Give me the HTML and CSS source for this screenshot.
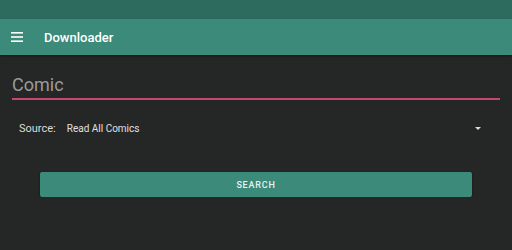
FILE: index.html
```html
<!DOCTYPE html>
<html>
<head>
    <title>Downloader</title>
    <link rel="stylesheet" href="styles.css">
</head>
<body>
    <div class="status-bar"></div>
    <div class="app-bar">
        <svg class="menu-icon" width="12" height="10" viewBox="0 0 12 10">
            <rect x="0" y="0" width="12" height="1.6" fill="#fff"/>
            <rect x="0" y="4.2" width="12" height="1.6" fill="#fff"/>
            <rect x="0" y="8.4" width="12" height="1.6" fill="#fff"/>
        </svg>
        <h1>Downloader</h1>
    </div>
    <div class="content">
        <div class="text-field">
            <span class="hint">Comic</span>
        </div>
        <div class="source-row">
            <span class="source-label">Source:</span>
            <span class="source-value">Read All Comics</span>
            <span class="arrow"></span>
        </div>
        <div class="button-row">
            <button class="search-button">SEARCH</button>
        </div>
    </div>
</body>
</html>
```

FILE: styles.css
```css
html, body {
    margin: 0;
    padding: 0;
    background: #252626;
    font-family: Roboto, "Liberation Sans", sans-serif;
}

.status-bar {
    height: 19px;
    background: #2d6b5f;
}

.app-bar {
    height: 36px;
    background: #3b8a7a;
    display: flex;
    align-items: center;
    padding-left: 11px;
    box-shadow: 0 1px 2px rgba(0, 0, 0, 0.5);
}

.menu-icon {
    display: block;
}

.app-bar h1 {
    margin: 0 0 0 21px;
    font-size: 13px;
    font-weight: 500;
    color: #ffffff;
}

.content {
    padding: 0 12px;
}

.text-field {
    margin-top: 17px;
    height: 26px;
    border-bottom: 2px solid #c2486f;
    display: flex;
    align-items: flex-end;
}

.hint {
    font-size: 18px;
    color: #9a9b9b;
    padding-bottom: 3px;
}

.source-row {
    display: flex;
    align-items: center;
    margin-top: 20px;
    padding-left: 7px;
    height: 16px;
}

.source-label {
    font-size: 11px;
    color: #dcdcdc;
}

.source-value {
    margin-left: 11px;
    font-size: 10px;
    color: #e0e0e0;
    flex: 1;
}

.arrow {
    width: 0;
    height: 0;
    border-left: 3px solid transparent;
    border-right: 3px solid transparent;
    border-top: 3px solid #dcdcdc;
    margin-right: 19px;
}

.button-row {
    padding: 0 28px;
    margin-top: 36px;
}

.search-button {
    width: 100%;
    height: 25px;
    border: none;
    border-radius: 2px;
    background: #3b8a7a;
    color: #e8f3f0;
    font-family: Roboto, "Liberation Sans", sans-serif;
    font-size: 9px;
    font-weight: 500;
    letter-spacing: 0.8px;
    box-shadow: 0 1px 2px rgba(0, 0, 0, 0.6);
}
```
